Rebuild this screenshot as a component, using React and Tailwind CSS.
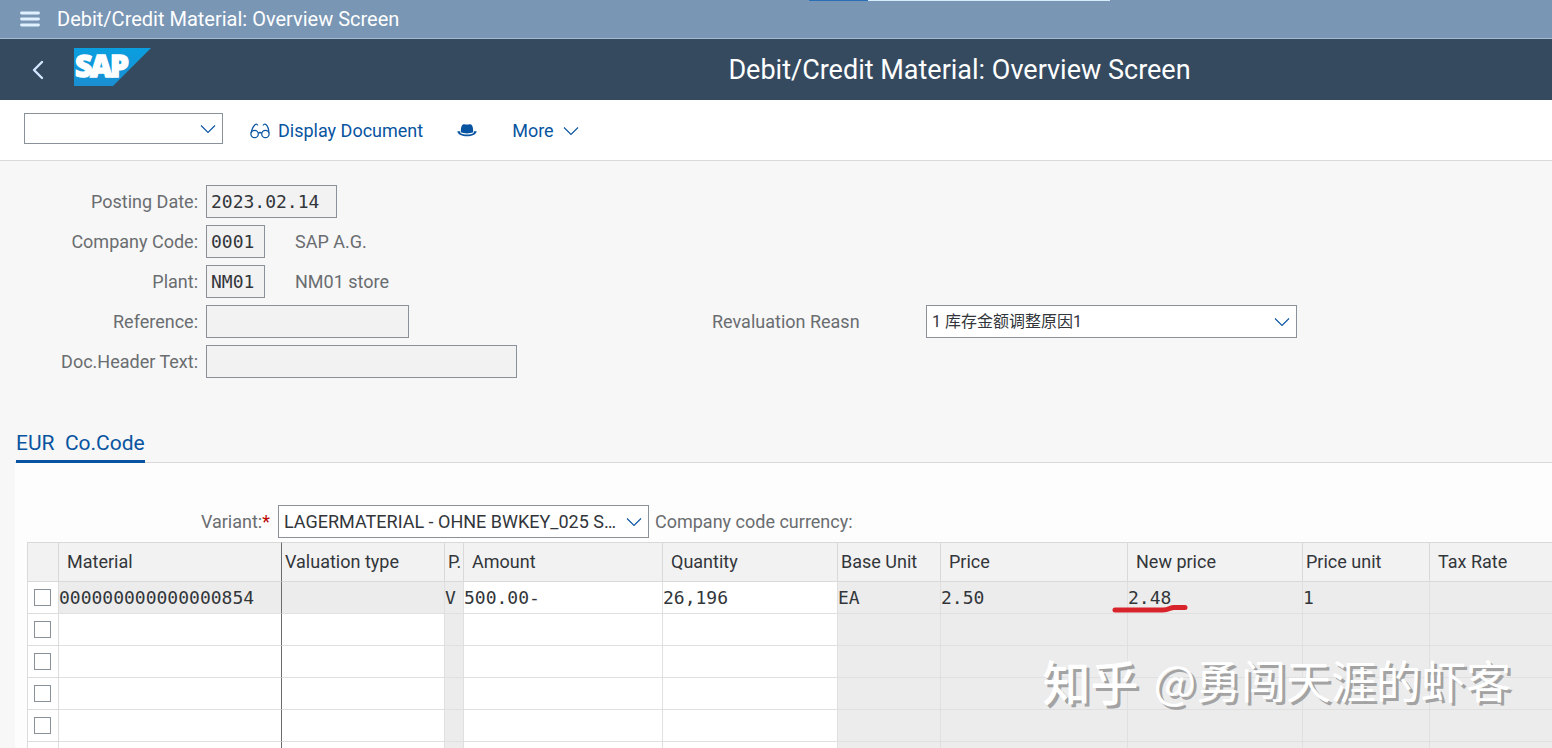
import { ChevronLeft } from "lucide-react";

const columns = [
  { title: "Material", width: "w-[223px]", head: "pl-2 border-r-[#6a6d70]", readOnly: false },
  { title: "Valuation type", width: "w-[163px]", head: "pl-[3px]", readOnly: false },
  { title: "P.", width: "w-[19px]", head: "pl-[3px]", readOnly: true },
  { title: "Amount", width: "w-[199px]", head: "pl-2", editable: true },
  { title: "Quantity", width: "w-[175px]", head: "pl-2", editable: true },
  { title: "Base Unit", width: "w-[103px]", head: "pl-[3px]", readOnly: true },
  { title: "Price", width: "w-[187px]", head: "pl-2", readOnly: true },
  { title: "New price", width: "w-[175px]", head: "pl-2", readOnly: true },
  { title: "Price unit", width: "w-[127px]", head: "pl-[3px]", readOnly: true },
  { title: "Tax Rate", width: "", head: "pl-2", readOnly: true },
];

const rows = [
  ["000000000000000854", "", "V", "500.00-", "26,196", "EA", "2.50", "2.48", "1", ""],
  [],
  [],
  [],
  [],
  [],
];

const mono = "font-['DejaVu_Sans_Mono',monospace] text-[18px]";

const MenuIcon = () => (
  <svg viewBox="0 0 20 16" className="w-5 h-4" fill="none" stroke="currentColor" strokeWidth="2.800" strokeLinecap="round" aria-hidden="true">
    <path d="M1.500 2H18.500M1.500 8H18.500M1.500 14H18.500" />
  </svg>
);

const ArrowIcon = ({ className }) => (
  <svg viewBox="0 0 16 10" className={`w-4 h-2.5 ${className}`} fill="none" stroke="currentColor" strokeWidth="1.1" aria-hidden="true">
    <path d="M1 1.500 8 8.500 15 1.500" />
  </svg>
);

const GlassesIcon = () => (
  <svg viewBox="0 0 20 16" className="w-5 h-4" fill="none" stroke="currentColor" strokeWidth="1.2" aria-hidden="true">
    <circle cx="4.6" cy="11" r="3.7" />
    <circle cx="15.4" cy="11" r="3.7" />
    <path d="M8.2 10.4c1-1 2.600-1 3.600 0M1 10.200C1.800 6.500 3.500 3 5.300 1.500c1-.8 2.200-.3 2.400 1M19 10.200C18.800 6.500 17.600 3 15.900 1.500c-1-.8-2.500-.3-2.900 1" />
  </svg>
);

const HatIcon = () => (
  <svg viewBox="0 0 20 13" className="w-5 h-[13px]" fill="currentColor" aria-hidden="true">
    <path d="M3.900 8.300C3.700 4.300 4.300 1.300 6 .5c1.300-.7 2.900.1 4 .1S12.700-.2 14 .5c1.700.8 2.300 3.800 2.100 7.800-3.300 1.500-8.900 1.500-12.200 0Z" />
    <path d="M.2 7.600c1.200-.5 2.300-.5 3.100-.2v1.500c3.800 2 9.600 2 13.400 0V7.400c.8-.3 1.900-.3 3.100.2-.9 3.200-4.800 4.700-9.800 4.700S1.100 10.800.2 7.600Z" />
  </svg>
);

const SapLogo = () => (
  <svg viewBox="0 0 77 38" className="w-[77px] h-[38px] overflow-visible" role="img" aria-label="SAP">
    <defs>
      <linearGradient id="sap" x1="0" y1="0" x2="0" y2="1">
        <stop offset="0" stopColor="#0a9fe0" />
        <stop offset="1" stopColor="#1a8fd2" />
      </linearGradient>
    </defs>
    <path d="M0 0h77L39 38H0Z" fill="url(#sap)" />
    <text
      x="1"
      y="29"
      fill="#fff"
      stroke="#fff"
      strokeWidth="1.4"
      className="font-['Open_Sans',sans-serif] font-extrabold text-[30px] tracking-[-2px]"
    >
      SAP
    </text>
  </svg>
);

const Select = ({ id, label, value, className }) => (
  <div className={`relative ${className}`}>
    <select
      id={id}
      aria-label={label}
      className="appearance-none block w-full h-full bg-white border border-[#89919a] pl-[5px] pr-7 text-[#32363a]"
    >
      <option>{value}</option>
    </select>
    <ArrowIcon className="absolute right-[7px] top-1/2 -translate-y-1/2 text-[#0854a0] pointer-events-none" />
  </div>
);

const FormRow = ({ id, label, value = "", width, text, children }) => (
  <div className="grid grid-cols-[198px_498px_1fr] gap-x-2 items-center">
    <label htmlFor={id} className="text-right">
      {label}
    </label>
    <div className="flex items-center">
      <input
        id={id}
        readOnly
        defaultValue={value}
        className={`h-[33px] border border-[#89919a] bg-[#f2f2f2] px-1 text-[#32363a] ${mono} ${width}`}
      />
      {text && <span className="ml-[30px]">{text}</span>}
    </div>
    {children}
  </div>
);

const cellColor = (column, rowIndex, colIndex) =>
  column.readOnly || (rowIndex === 0 && colIndex < 2) ? "bg-[#ececec]" : "bg-white";

const ItemTable = () => (
  <table className="table-fixed w-full border-separate border-spacing-0 text-[#32363a]">
    <thead>
      <tr className="h-10">
        <th className="w-8 bg-[#f2f2f2] border border-[#d9d9d9]" aria-label="Select" />
        {columns.map((column) => (
          <th
            key={column.title}
            scope="col"
            className={`bg-[#f2f2f2] border-y border-r last:border-r-0 border-[#d9d9d9] p-0 text-left font-normal whitespace-nowrap ${column.width} ${column.head}`}
          >
            {column.title}
          </th>
        ))}
      </tr>
    </thead>
    <tbody>
      {rows.map((row, rowIndex) => (
        <tr key={rowIndex} className="h-8">
          <td className="p-0 bg-white border-x border-b border-[#dcdcdc]">
            <input
              type="checkbox"
              aria-label={`Select row ${rowIndex + 1}`}
              className="appearance-none block w-[17px] h-[17px] ml-1.5 bg-white border border-[#89919a]"
            />
          </td>
          {columns.map((column, colIndex) => (
            <td
              key={column.title}
              className={`relative p-0 border-r last:border-r-0 border-b border-b-[#e0e0e0] whitespace-nowrap ${mono} ${cellColor(column, rowIndex, colIndex)} ${
                colIndex === 0 ? "border-r-[#6a6d70]" : "border-r-[#e0e0e0]"
              }`}
            >
              {column.editable ? (
                <input
                  aria-label={`${column.title} ${rowIndex + 1}`}
                  defaultValue={row[colIndex] || ""}
                  className="block w-full bg-transparent"
                />
              ) : (
                row[colIndex]
              )}
              {/* Hand-drawn marker under the new price */}
              {row[colIndex] === "2.48" && (
                <svg viewBox="0 0 76 10" className="absolute -left-4 top-[21px] w-[76px] h-[10px]" aria-hidden="true">
                  <path
                    d="M3 7H51C57 7 58 4.500 62 4.500H73"
                    fill="none"
                    stroke="#d8232a"
                    strokeWidth="5"
                    strokeLinecap="round"
                  />
                </svg>
              )}
            </td>
          ))}
        </tr>
      ))}
    </tbody>
  </table>
);

const App = () => {
  return (
    <div className="relative h-screen overflow-hidden flex flex-col bg-[#f7f7f7] font-[Roboto,'Noto_Sans_CJK_SC',sans-serif] text-[18px] leading-6 text-[#6a6d70]">
      {/* Window bar */}
      <div className="relative shrink-0 h-[39px] flex items-center gap-[17px] pl-5 bg-[#7996b5] border-b border-[#a5bbd2] text-[20px] text-white">
        <button type="button" aria-label="Menu" className="text-[#dff0ff]">
          <MenuIcon />
        </button>
        <span>Debit/Credit Material: Overview Screen</span>
        <div className="absolute left-[809px] top-0 flex h-px w-[301px] bg-[#d5ebfb]">
          <div className="w-[59px] bg-[#2a6fb5]" />
        </div>
      </div>

      {/* Shell header */}
      <header className="shrink-0 h-[61px] flex items-center bg-[#354a5f] text-white">
        <button type="button" aria-label="Back" className="ml-5 mr-[18px] text-[#d1e8ff]">
          <ChevronLeft strokeWidth={1.8} className="w-9 h-8" />
        </button>
        <div className="self-start pt-[9px]">
          <SapLogo />
        </div>
        <h1 className="flex-1 pl-[216px] text-center text-[27px]">Debit/Credit Material: Overview Screen</h1>
      </header>

      {/* Toolbar */}
      <div className="shrink-0 h-[61px] flex items-start pt-[13px] pl-6 bg-white border-b border-[#d9d9d9] text-[#0854a0]">
        <Select label="Command" value="" className="w-[199px] h-[31px]" />
        <button type="button" className="h-9 ml-[27px] flex items-center gap-2">
          <GlassesIcon />
          Display Document
        </button>
        <button type="button" aria-label="Header" className="h-[34px] ml-[34px]">
          <HatIcon />
        </button>
        <button type="button" className="h-9 ml-[35px] flex items-center gap-[9px]">
          More
          <ArrowIcon />
        </button>
      </div>

      <form className="shrink-0 flex flex-col gap-[7px] pt-6">
        <FormRow id="date" label="Posting Date:" value="2023.02.14" width="w-[131px]" />
        <FormRow id="company" label="Company Code:" value="0001" width="w-[59px]" text="SAP A.G." />
        <FormRow id="plant" label="Plant:" value="NM01" width="w-[59px]" text="NM01 store" />
        <FormRow id="reference" label="Reference:" width="w-[203px]">
          <div className="flex items-center gap-2">
            <label htmlFor="reason" className="w-[206px]">
              Revaluation Reasn
            </label>
            <Select id="reason" value="1 库存金额调整原因1" className="w-[371px] h-[33px] text-[16px]" />
          </div>
        </FormRow>
        <FormRow id="header-text" label="Doc.Header Text:" width="w-[311px]" />
      </form>

      <div role="tablist" className="shrink-0 mt-[49px] ml-[15px] h-9 flex border-b border-[#d9d9d9]">
        <button
          type="button"
          role="tab"
          aria-selected="true"
          className="h-9 ml-px pb-0.5 border-b-3 border-[#0854a0] text-[21px] text-[#0854a0] whitespace-pre"
        >
          {"EUR  Co.Code"}
        </button>
      </div>

      <main className="flex-1 min-h-0 ml-[15px] pl-3 pt-[42px] bg-[#fdfdfd]">
        <div className="flex items-center pb-1">
          <label htmlFor="variant" className="w-[243px] mr-2 text-right">
            Variant:<span className="text-[#bb0000]">*</span>
          </label>
          <Select id="variant" value="LAGERMATERIAL - OHNE BWKEY_025 S…" className="w-[371px] h-[33px]" />
          <span className="ml-1.5">Company code currency:</span>
        </div>
        <ItemTable />
      </main>

      {/* Watermark */}
      <div className="absolute right-[41px] bottom-[38px] flex items-center gap-[15px] font-['Noto_Sans_CJK_SC',sans-serif] text-[45px] leading-[60px] text-white whitespace-nowrap [text-shadow:3px_3px_0_#a3a3a3]">
        <span className="text-[48px] font-medium">知乎</span>
        <span>@勇闯天涯的虾客</span>
      </div>
    </div>
  );
};

export default App;
